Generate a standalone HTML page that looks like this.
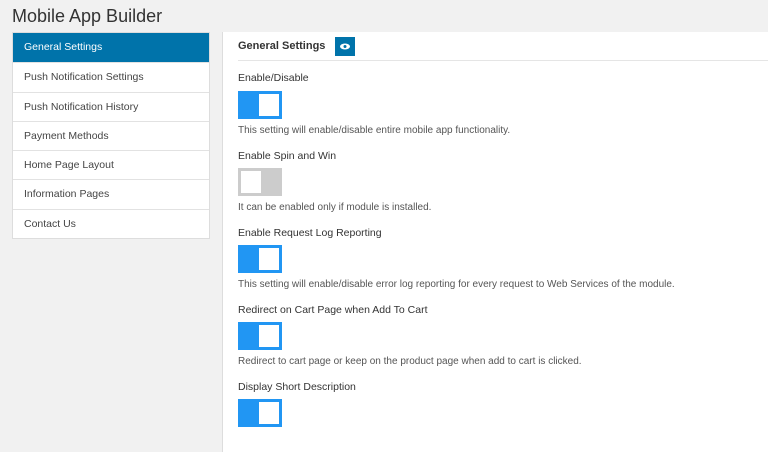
<!DOCTYPE html>
<html><head><style>
*{margin:0;padding:0;box-sizing:border-box}
body{width:768px;height:432px;overflow:hidden;background:#f1f1f1;font-family:"Liberation Sans","DejaVu Sans",sans-serif;color:#444;position:relative}
.title{position:absolute;left:12px;top:6px;font-size:18px;color:#333}
.side{position:absolute;left:12px;top:32px;width:198px;background:#fff;border:1px solid #ddd}
.side div{height:29.3px;line-height:29px;padding-left:11px;font-size:10.5px;color:#444;border-top:1px solid #e2e2e2}
.side div.act{background:#0073aa;color:#fff;border-top:none}
.panel{position:absolute;left:222px;top:32px;width:560px;height:420px;background:#fff;border-left:1px solid #ddd}
.hd{position:absolute;left:15px;top:8px;font-size:11px;font-weight:bold;color:#333}
.eye{position:absolute;left:112px;top:5px;width:20px;height:19px;background:#0073aa}
.hr{position:absolute;left:15px;right:0;top:28px;border-top:1px solid #e5e5e5}
.lab{position:absolute;left:15px;font-size:10.5px;color:#333}
.desc{position:absolute;left:15px;font-size:10px;color:#555}
.tg{position:absolute;left:15px;width:44px;height:28px;background:#2196f3}
.tg::after{content:"";position:absolute;right:3px;top:3px;width:20px;height:22px;background:#fff}
.tg.off{background:#ccc}
.tg.off::after{right:auto;left:3px}
</style></head><body>
<div class="title">Mobile App Builder</div>
<div class="side">
<div class="act">General Settings</div>
<div>Push Notification Settings</div>
<div>Push Notification History</div>
<div>Payment Methods</div>
<div>Home Page Layout</div>
<div>Information Pages</div>
<div>Contact Us</div>
</div>
<div class="panel">
<div class="hd">General Settings</div>
<div class="eye"><svg width="20" height="19" viewBox="0 0 20 19"><ellipse cx="10" cy="9.5" rx="5" ry="3" fill="#fff"/><circle cx="10" cy="9.5" r="1.5" fill="#0073aa"/></svg></div>
<div class="hr"></div>
<div class="lab" style="top:40px">Enable/Disable</div>
<div class="tg" style="top:59px"></div>
<div class="desc" style="top:93px">This setting will enable/disable entire mobile app functionality.</div>
<div class="lab" style="top:118px">Enable Spin and Win</div>
<div class="tg off" style="top:136px"></div>
<div class="desc" style="top:170px">It can be enabled only if module is installed.</div>
<div class="lab" style="top:195px">Enable Request Log Reporting</div>
<div class="tg" style="top:213px"></div>
<div class="desc" style="top:247px">This setting will enable/disable error log reporting for every request to Web Services of the module.</div>
<div class="lab" style="top:272px">Redirect on Cart Page when Add To Cart</div>
<div class="tg" style="top:290px"></div>
<div class="desc" style="top:324px">Redirect to cart page or keep on the product page when add to cart is clicked.</div>
<div class="lab" style="top:349px">Display Short Description</div>
<div class="tg" style="top:367px"></div>
</div>
</body></html>
